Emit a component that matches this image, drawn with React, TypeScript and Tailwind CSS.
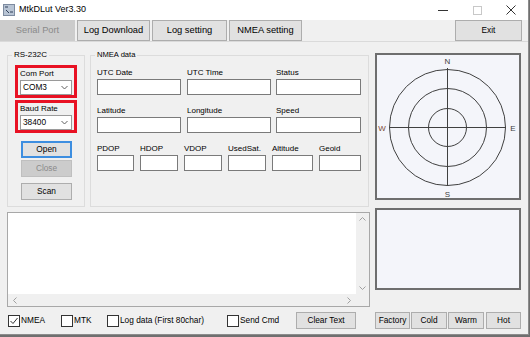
import React from "react";

const btn =
  "flex items-center justify-center border border-[#adadad] bg-[#e1e1e1] text-black";

function Tab({ label, w, disabled }: { label: string; w: string; disabled?: boolean }) {
  return (
    <div
      className={
        disabled
          ? `flex h-[21px] ${w} items-center justify-center bg-[#cccccc] text-[9.3px] text-[#8a8a8a]`
          : `${btn} h-[21px] ${w} text-[9.3px]`
      }
    >
      {label}
    </div>
  );
}

function Combo({ label, value }: { label: string; value: string }) {
  return (
    <div className="h-[33px] w-[62px] border-[3px] border-[#e81123]">
      <div className="pl-[2px] text-[8px] leading-[11px] text-black">{label}</div>
      <div className="mt-[1px] ml-[2px] flex h-[15px] w-[52px] items-center justify-between border border-[#9a9a9a] bg-white pl-[2px] pr-[3px] text-[8.3px]">
        <span>{value}</span>
        <svg width="7" height="5" viewBox="0 0 7 5">
          <path d="M0.5 1 L3.5 4 L6.5 1" fill="none" stroke="#606060" strokeWidth="1" />
        </svg>
      </div>
    </div>
  );
}

function Field({ label, w, ml }: { label: string; w: string; ml: string }) {
  return (
    <div className={`${ml} flex flex-col`}>
      <div className="h-[12px] text-[8px] leading-[12px] text-black">{label}</div>
      <div className={`h-[16px] ${w} border border-[#7a7a7a] bg-white`} />
    </div>
  );
}

function Check({ label, checked, w }: { label: string; checked?: boolean; w: string }) {
  return (
    <div className={`flex ${w} items-center`}>
      <div className="flex h-[12px] w-[12px] items-center justify-center border border-[#333] bg-white">
        {checked && (
          <svg width="10" height="10" viewBox="0 0 10 10">
            <path d="M1.5 5 L4 7.5 L8.5 2" fill="none" stroke="#333" strokeWidth="1" />
          </svg>
        )}
      </div>
      <span className="ml-[1px] text-[8.3px] text-black">{label}</span>
    </div>
  );
}

function Compass() {
  return (
    <svg width="142" height="143" viewBox="0 0 142 143">
      <g fill="none" stroke="#404040" strokeWidth="1">
        <circle cx="70.5" cy="72.5" r="58" />
        <circle cx="70.5" cy="72.5" r="39" />
        <circle cx="70.5" cy="72.5" r="19" />
        <line x1="70.5" y1="13" x2="70.5" y2="131" />
        <line x1="12" y1="72.5" x2="129" y2="72.5" />
      </g>
      <g fill="#404040" fontSize="8" fontFamily="Liberation Sans, sans-serif" textAnchor="middle">
        <text x="70.5" y="9">N</text>
        <text x="70.5" y="142">S</text>
        <text x="5" y="75.5" fill="#7a4a35">W</text>
        <text x="136" y="75.5">E</text>
      </g>
    </svg>
  );
}

export default function App() {
  return (
    <div className="h-[337px] w-[530px] bg-[#6f6f6f] font-['Liberation_Sans',Arial,sans-serif]">
      <div className="flex h-[335px] w-[529px] flex-col border-r border-b border-[#8c8c8c] bg-[#f0f0f0]">
        {/* title bar */}
        <div className="flex h-[20px] items-center bg-white">
          <svg className="ml-[3px]" width="12" height="12" viewBox="0 0 12 12">
            <rect x="0.5" y="0.5" width="11" height="11" fill="#b8c4d4" stroke="#7d8ba0" />
            <path d="M2 3 L5 3 M3 6 L6 9 M7 8 L10 8" stroke="#30405a" strokeWidth="1" />
          </svg>
          <span className="ml-[4px] text-[9px] text-black">MtkDLut Ver3.30</span>
          <div className="ml-auto flex h-full">
            <div className="flex w-[34px] items-center justify-center">
              <div className="h-px w-[10px] bg-[#333]" />
            </div>
            <div className="flex w-[34px] items-center justify-center">
              <div className="h-[9px] w-[9px] border border-[#c8c8c8]" />
            </div>
            <div className="flex w-[34px] items-center justify-center">
              <svg width="10" height="10" viewBox="0 0 10 10">
                <path d="M0.5 0.5 L9.5 9.5 M9.5 0.5 L0.5 9.5" stroke="#333" strokeWidth="1" />
              </svg>
            </div>
          </div>
        </div>

        {/* tabs */}
        <div className="flex h-[22px] gap-[2px] border-b border-[#dadada]">
          <Tab label="Serial Port" w="w-[75px]" disabled />
          <Tab label="Log Download" w="w-[73px]" />
          <Tab label="Log setting" w="w-[75px]" />
          <Tab label="NMEA setting" w="w-[73px]" />
          <div className={`${btn} ml-auto mr-[6px] h-[21px] w-[67px] text-[8.3px]`}>Exit</div>
        </div>

        {/* body */}
        <div className="flex px-[7px] pt-[6px]">
          <div className="flex w-[364px] flex-col">
            <div className="flex h-[159px]">
              <fieldset className="h-[159px] w-[78px] border border-[#dcdcdc]">
                <legend className="ml-[4px] px-[2px] text-[8px] leading-[14px] text-black">RS-232C</legend>
                <div className="ml-[7px] mt-[3px] flex flex-col gap-[2px]">
                  <Combo label="Com Port" value="COM3" />
                  <Combo label="Baud Rate" value="38400" />
                </div>
                <div className="ml-[13px] mt-[8px] flex flex-col">
                  <div className="flex h-[17px] w-[51px] items-center justify-center border-2 border-[#3d8ee0] bg-[#e1e1e1] text-[8.3px] text-black">
                    Open
                  </div>
                  <div className="mt-[2px] flex h-[17px] w-[51px] items-center justify-center border border-[#bfbfbf] bg-[#cccccc] text-[8.3px] text-[#8a8a8a]">
                    Close
                  </div>
                  <div className={`${btn} mt-[6px] h-[17px] w-[51px] text-[8.3px]`}>Scan</div>
                </div>
              </fieldset>

              <fieldset className="ml-[5px] h-[159px] w-[279px] border border-[#dcdcdc]">
                <legend className="ml-[4px] px-[2px] text-[7.6px] leading-[14px] text-black">NMEA data</legend>
                <div className="mt-[5px] flex">
                  <Field label="UTC Date" w="w-[84px]" ml="ml-[6px]" />
                  <Field label="UTC Time" w="w-[84px]" ml="ml-[6px]" />
                  <Field label="Status" w="w-[85px]" ml="ml-[5px]" />
                </div>
                <div className="mt-[10px] flex">
                  <Field label="Latitude" w="w-[84px]" ml="ml-[6px]" />
                  <Field label="Longitude" w="w-[84px]" ml="ml-[6px]" />
                  <Field label="Speed" w="w-[85px]" ml="ml-[5px]" />
                </div>
                <div className="mt-[10px] flex">
                  <Field label="PDOP" w="w-[37px]" ml="ml-[6px]" />
                  <Field label="HDOP" w="w-[38px]" ml="ml-[6px]" />
                  <Field label="VDOP" w="w-[38px]" ml="ml-[6px]" />
                  <Field label="UsedSat." w="w-[38px]" ml="ml-[6px]" />
                  <Field label="Altitude" w="w-[41px]" ml="ml-[6px]" />
                  <Field label="Geoid" w="w-[42px]" ml="ml-[6px]" />
                </div>
              </fieldset>
            </div>

            {/* log text */}
            <div className="mt-[5px] flex h-[95px] flex-col border border-[#a8a8a8] bg-white">
              <div className="flex flex-1">
                <div className="flex-1" />
                <div className="flex w-[13px] flex-col items-center justify-between bg-[#f0f0f0] py-[4px]">
                  <svg width="7" height="4" viewBox="0 0 7 4">
                    <path d="M0.5 3.5 L3.5 0.5 L6.5 3.5" fill="none" stroke="#a0a0a0" />
                  </svg>
                  <svg width="7" height="4" viewBox="0 0 7 4">
                    <path d="M0.5 0.5 L3.5 3.5 L6.5 0.5" fill="none" stroke="#a0a0a0" />
                  </svg>
                </div>
              </div>
              <div className="flex h-[12px]">
                <div className="flex flex-1 items-center justify-between bg-[#f0f0f0] px-[5px]">
                  <svg width="4" height="7" viewBox="0 0 4 7">
                    <path d="M3.5 0.5 L0.5 3.5 L3.5 6.5" fill="none" stroke="#a0a0a0" />
                  </svg>
                  <svg width="4" height="7" viewBox="0 0 4 7">
                    <path d="M0.5 0.5 L3.5 3.5 L0.5 6.5" fill="none" stroke="#a0a0a0" />
                  </svg>
                </div>
                <div className="w-[13px] bg-[#f0f0f0]" />
              </div>
            </div>

            {/* options */}
            <div className="mt-[5px] flex h-[17px] items-center pl-[1px]">
              <Check label="NMEA" checked w="w-[53px]" />
              <Check label="MTK" w="w-[46px]" />
              <Check label="Log data (First 80char)" w="w-[120px]" />
              <Check label="Send Cmd" w="w-[69px]" />
              <div className={`${btn} h-[17px] w-[60px] text-[8.3px]`}>Clear Text</div>
            </div>
          </div>

          <div className="ml-[5px] flex w-[146px] flex-col">
            <div className="mt-[5px] h-[147px] w-[146px] border-2 border-[#6e6e6e] bg-[#f4f5fa]">
              <Compass />
            </div>
            <div className="mt-[8px] h-[82px] w-[146px] border-2 border-[#6e6e6e] bg-[#f4f5fa]" />
            <div className="mt-[22px] flex h-[17px] text-[8.3px]">
              <div className={`${btn} h-[17px] w-[35px]`}>Factory</div>
              <div className={`${btn} ml-[1px] h-[17px] w-[36px]`}>Cold</div>
              <div className={`${btn} ml-[1px] h-[17px] w-[36px]`}>Warm</div>
              <div className={`${btn} ml-[2px] h-[17px] w-[35px]`}>Hot</div>
            </div>
          </div>
        </div>
      </div>
    </div>
  );
}
